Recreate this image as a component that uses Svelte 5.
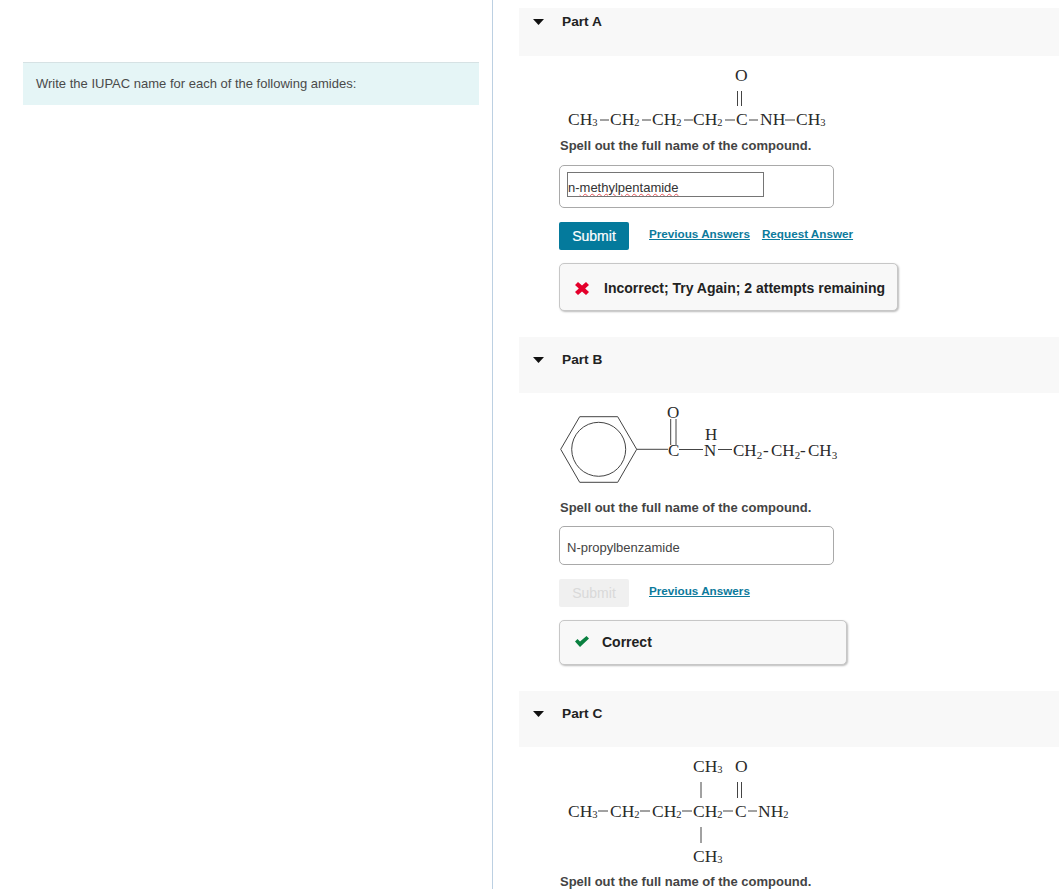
<script>
  // structure diagrams are drawn in page coordinates through each svg's viewBox
  let parts = { a: "Part A", b: "Part B", c: "Part C" };
</script>

{#snippet chem(x, y, label, sub, drop = 1)}
  <text {x} {y}>{label}{#if sub}<tspan class="sub" dy={drop}>{sub}</tspan>{/if}</text>
{/snippet}

{#snippet partHead(title, cls)}
  <div class="part-head {cls}">
    <svg class="caret" width="11" height="6" viewBox="0 0 11 6"><path d="M0 0H11L5.5 6Z" fill="#111" /></svg>
    <span>{title}</span>
  </div>
{/snippet}

<div class="page">
  <aside class="left">
    <div class="intro">Write the IUPAC name for each of the following amides:</div>
  </aside>

  <main class="right">
    <section class="part-a">
      {@render partHead(parts.a, "head-a")}
      <svg class="chem" width="280" height="79" viewBox="559 56 280 79">
        {@render chem(735, 81, "O")}
        <path d="M737.5 91V106M741.5 91V106" />
        {@render chem(568, 125, "CH", "3")}
        <path d="M600 120H609M642 120H651M684 120H693M725 120H735M749 120H758M785 120H795" />
        {@render chem(610, 125, "CH", "2")}
        {@render chem(652, 125, "CH", "2")}
        {@render chem(693, 125, "CH", "2")}
        {@render chem(736, 125, "C")}
        {@render chem(760, 125, "NH")}
        {@render chem(796, 125, "CH", "3")}
      </svg>
      <p class="prompt">Spell out the full name of the compound.</p>
      <div class="answer">
        <div class="inner">n-<span class="squiggle">methylpentamide</span></div>
      </div>
      <div class="actions">
        <button class="submit">Submit</button>
        <a href="#prev">Previous Answers</a>
        <a href="#req">Request Answer</a>
      </div>
      <div class="feedback wrong">
        <svg width="14" height="13" viewBox="0 0 14 13"><path d="M0 3 3 0 7 3.6 11 0 14 3 10.2 6.5 14 10 11 13 7 9.4 3 13 0 10 3.8 6.5Z" fill="#e4002b" /></svg>
        <span>Incorrect; Try Again; 2 attempts remaining</span>
      </div>
    </section>

    <section class="part-b">
      {@render partHead(parts.b, "head-b")}
      <svg class="chem bench" width="285" height="102" viewBox="559 393 285 102">
        <path d="M560.7 449.3 579.7 416.7H617.7L636.7 449.3 617.7 482.3H579.7ZM636.7 449.3H668M670.7 419V445M676 419V445M679 449.5H703M718 449.5H732" />
        <circle cx="598.7" cy="449.3" r="27" />
        {@render chem(667, 418, "O")}
        {@render chem(668, 456, "C")}
        {@render chem(705, 440, "H")}
        {@render chem(704, 456, "N")}
        {@render chem(733, 456, "CH", "2", 3)}
        {@render chem(763, 456, "-")}
        {@render chem(771, 456, "CH", "2", 3)}
        {@render chem(800, 456, "-")}
        {@render chem(808, 456, "CH", "3", 3)}
      </svg>
      <p class="prompt">Spell out the full name of the compound.</p>
      <div class="answer done">N-propylbenzamide</div>
      <div class="actions">
        <button class="submit off" disabled>Submit</button>
        <a href="#prev">Previous Answers</a>
      </div>
      <div class="feedback right-answer">
        <svg width="14" height="11" viewBox="0 0 14 11"><path d="M0 5.5 2.5 3 5 5.5 11.5 0 14 2.5 5 11Z" fill="#0a8040" /></svg>
        <span>Correct</span>
      </div>
    </section>

    <section class="part-c">
      {@render partHead(parts.c, "head-c")}
      <svg class="chem" width="280" height="120" viewBox="559 747 280 120">
        {@render chem(693, 772, "CH", "3")}
        {@render chem(735, 772, "O")}
        <path d="M701 782V798M737.5 782V798M741.5 782V798" />
        {@render chem(568, 817, "CH", "3")}
        <path d="M598 811H608M640 811H650M682 811H692M723 811H733M748 811H757" />
        {@render chem(610, 817, "CH", "2")}
        {@render chem(652, 817, "CH", "2")}
        {@render chem(693, 817, "CH", "2")}
        {@render chem(735, 817, "C")}
        {@render chem(758, 817, "NH", "2")}
        <path d="M701 827V843" />
        {@render chem(693, 862, "CH", "3")}
      </svg>
      <p class="prompt last">Spell out the full name of the compound.</p>
    </section>
  </main>
</div>

<style>
  :global(body) {
    font-family: "Liberation Sans", Arial, sans-serif;
    color: #333;
    background: #fff;
  }

  .page {
    display: flex;
    height: 100vh;
    overflow: hidden;
  }

  .left {
    box-sizing: border-box;
    width: 493px;
    flex: none;
    padding: 62px 13px 0 23px;
    border-right: 1px solid #bcd0e2;
  }

  .intro {
    height: 43px;
    box-sizing: border-box;
    padding: 13px 13px 0;
    background: #e5f5f6;
    border-top: 1px solid #d6e2e4;
    font-size: 13px;
    line-height: 16px;
    color: #4a4a4a;
  }

  .right {
    flex: 1;
    min-width: 0;
    padding: 8px 0 0 26px;
  }

  .part-head {
    display: flex;
    align-items: flex-start;
    padding: 6px 0 0 14px;
    background: #f8f8f8;
    font-size: 13.7px;
    font-weight: bold;
    line-height: 16px;
    color: #222;
    box-sizing: border-box;
  }

  .head-a { height: 48px; }
  .head-b { height: 56px; padding-top: 15px; }
  .head-c { height: 56px; padding-top: 15px; }

  .caret {
    margin: 5px 18px 0 0;
    flex: none;
  }

  .chem {
    display: block;
    margin-left: 40px;
  }

  .chem text {
    font-family: "Liberation Serif", "Times New Roman", serif;
    font-size: 17.5px;
    fill: #2a2a2a;
  }

  .chem .sub {
    font-size: 10.5px;
  }

  .bench text {
    font-size: 17px;
  }

  .bench .sub {
    font-size: 11px;
  }

  .chem path,
  .chem circle {
    fill: none;
    stroke: #444;
    stroke-width: 1;
  }

  .prompt {
    margin: 3px 0 0 41px;
    font-size: 13px;
    font-weight: bold;
    line-height: 16px;
    color: #444;
  }

  .part-b .prompt { margin-top: 5px; }
  .part-c .prompt { margin-top: 7px; }

  .answer {
    box-sizing: border-box;
    width: 275px;
    height: 43px;
    margin: 11px 0 0 40px;
    padding: 6px 0 0 8px;
    border: 1px solid #a9a9a9;
    border-radius: 5px;
    font-size: 13px;
  }

  .inner {
    box-sizing: border-box;
    width: 197px;
    height: 25px;
    padding-top: 6px;
    border: 1px solid #757575;
    line-height: 18px;
    overflow: hidden;
    color: #333;
    margin-left: -1px;
  }

  .squiggle {
    text-decoration: underline wavy #e8555a 1px;
    text-underline-offset: 1px;
  }

  .done {
    height: 39px;
    margin-top: 10px;
    padding: 13px 0 0 7px;
    line-height: 16px;
    color: #444;
  }

  .actions {
    display: flex;
    align-items: flex-start;
    margin: 14px 0 0 40px;
    gap: 12px;
    font-size: 11.7px;
    font-weight: bold;
  }

  .actions a {
    color: #0c7a9c;
    line-height: 14px;
    margin-top: 5px;
  }

  .submit {
    width: 70px;
    height: 28px;
    margin-right: 8px;
    padding: 0;
    border: 0;
    border-radius: 2px;
    background: #047a9c;
    color: #fff;
    font-family: inherit;
    font-size: 14px;
    -webkit-text-stroke: 0.2px #fff;
  }

  .submit.off {
    background: #f0f0f0;
    color: #d9d9d9;
    -webkit-text-stroke: 0;
  }

  .feedback {
    display: flex;
    align-items: center;
    box-sizing: border-box;
    margin: 13px 0 0 40px;
    border: 1px solid #c7c7c7;
    border-radius: 5px;
    background: #f8f8f8;
    box-shadow: 1px 1px 2px #bbb;
    font-size: 14px;
    font-weight: bold;
    color: #222;
  }

  .wrong {
    width: 339px;
    height: 48px;
    padding: 2px 0 0 15px;
    gap: 15px;
    margin-bottom: 26px;
  }

  .right-answer {
    width: 288px;
    height: 45px;
    padding: 0 0 2px 15px;
    gap: 13px;
    margin-bottom: 26px;
  }
</style>
